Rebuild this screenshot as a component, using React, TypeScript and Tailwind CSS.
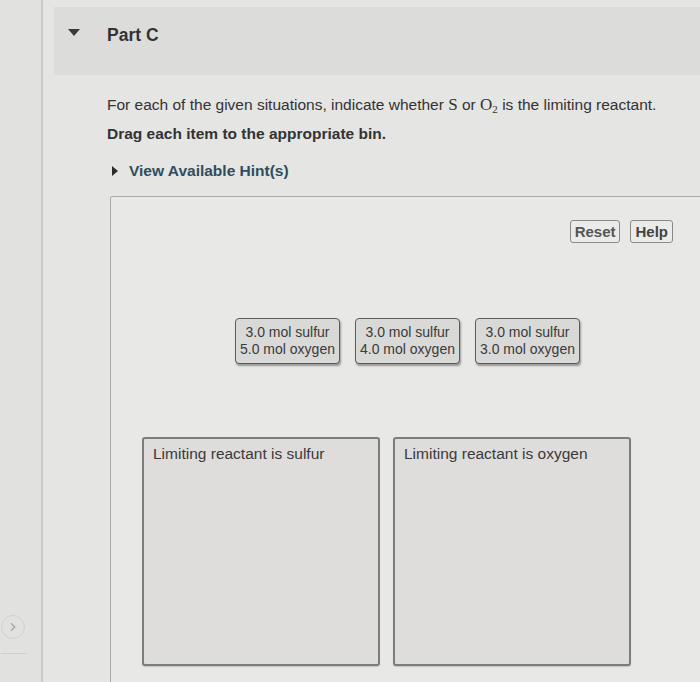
import { ChevronRight } from "lucide-react";

const items = [
  ["3.0 mol sulfur", "5.0 mol oxygen"],
  ["3.0 mol sulfur", "4.0 mol oxygen"],
  ["3.0 mol sulfur", "3.0 mol oxygen"],
];

const bins = ["Limiting reactant is sulfur", "Limiting reactant is oxygen"];

export default function App() {
  return (
    <div
      className="w-[700px] h-[682px] overflow-hidden flex bg-[#e5e5e3] text-[#333]"
      style={{ fontFamily: '"Liberation Sans", Arial, sans-serif' }}
    >
      {/* side rail */}
      <aside className="w-[43px] shrink-0 border-r-2 border-[#c9c9c7] bg-[#e1e1df] flex flex-col justify-end pb-[28px] pl-[1px]">
        <div className="w-[24px] h-[24px] rounded-full border border-[#d0d0ce] flex items-center justify-center">
          <ChevronRight size={14} className="text-[#a5a5a3]" />
        </div>
        <div className="mt-[14px] h-px w-[26px] bg-[#cfcfcd]" />
      </aside>

      <main className="flex-1 pt-[7px]">
        <div className="ml-[11px] h-[68px] bg-[#dcdcda] flex items-start pt-[15px]">
          <span className="ml-[14px] mt-[7px] w-0 h-0 border-l-[6px] border-r-[6px] border-t-[7px] border-l-transparent border-r-transparent border-t-[#3a3a3a]" />
          <h2 className="ml-[27px] text-[17.5px] font-bold text-[#333]">Part C</h2>
        </div>

        <div className="pl-[64px] pt-[20px]">
          <p className="text-[15.5px] leading-[20px]">
            For each of the given situations, indicate whether{" "}
            <span style={{ fontFamily: '"Liberation Serif", serif' }} className="text-[17px]">S</span> or{" "}
            <span style={{ fontFamily: '"Liberation Serif", serif' }} className="text-[17px]">
              O<sub className="text-[11px]">2</sub>
            </span>{" "}
            is the limiting reactant.
          </p>
          <p className="mt-[7px] text-[15.5px] font-bold">Drag each item to the appropriate bin.</p>
          <div className="mt-[14px] ml-[5px] flex items-center gap-[11px] text-[15.5px] font-bold text-[#2f4d5c]">
            <span className="w-0 h-0 border-t-[5px] border-b-[5px] border-l-[6px] border-t-transparent border-b-transparent border-l-[#2b2b2b]" />
            View Available Hint(s)
          </div>
        </div>

        <section className="ml-[67px] -mr-[8px] mt-[13px] h-[500px] border border-[#a9a9a7] rounded-[2px] bg-[#e8e8e6] pl-[31px] pt-[23px]">
          <div className="flex justify-end gap-[10px] pr-[34px]">
            <button className="px-[4px] h-[23px] border border-[#8a8a88] rounded-[3px] text-[15px] font-bold text-[#555] bg-[#ebebe9]">
              Reset
            </button>
            <button className="px-[4px] h-[23px] border border-[#8a8a88] rounded-[3px] text-[15px] font-bold text-[#444] bg-[#ebebe9]">
              Help
            </button>
          </div>

          <div className="mt-[75px] flex gap-[15px] pl-[93px]">
            {items.map(([a, b], i) => (
              <div
                key={i}
                className="w-[105px] h-[46px] rounded-[4px] border border-[#5c5c5a] bg-[#d9d9d7] shadow-[1px_2px_2px_rgba(0,0,0,0.35)] flex flex-col items-center justify-center text-[14px] leading-[17px] text-[#3a3a3a]"
              >
                <span>{a}</span>
                <span>{b}</span>
              </div>
            ))}
          </div>

          <div className="mt-[73px] flex gap-[13px]">
            {bins.map((label) => (
              <div
                key={label}
                className="w-[238px] h-[229px] border-2 border-[#7d7d7b] rounded-[3px] bg-[#dedddb] shadow-[0_1px_1px_rgba(0,0,0,0.15)] px-[9px] pt-[3px] text-[15.5px] text-[#3a3a3a]"
              >
                {label}
              </div>
            ))}
          </div>
        </section>
      </main>
    </div>
  );
}
